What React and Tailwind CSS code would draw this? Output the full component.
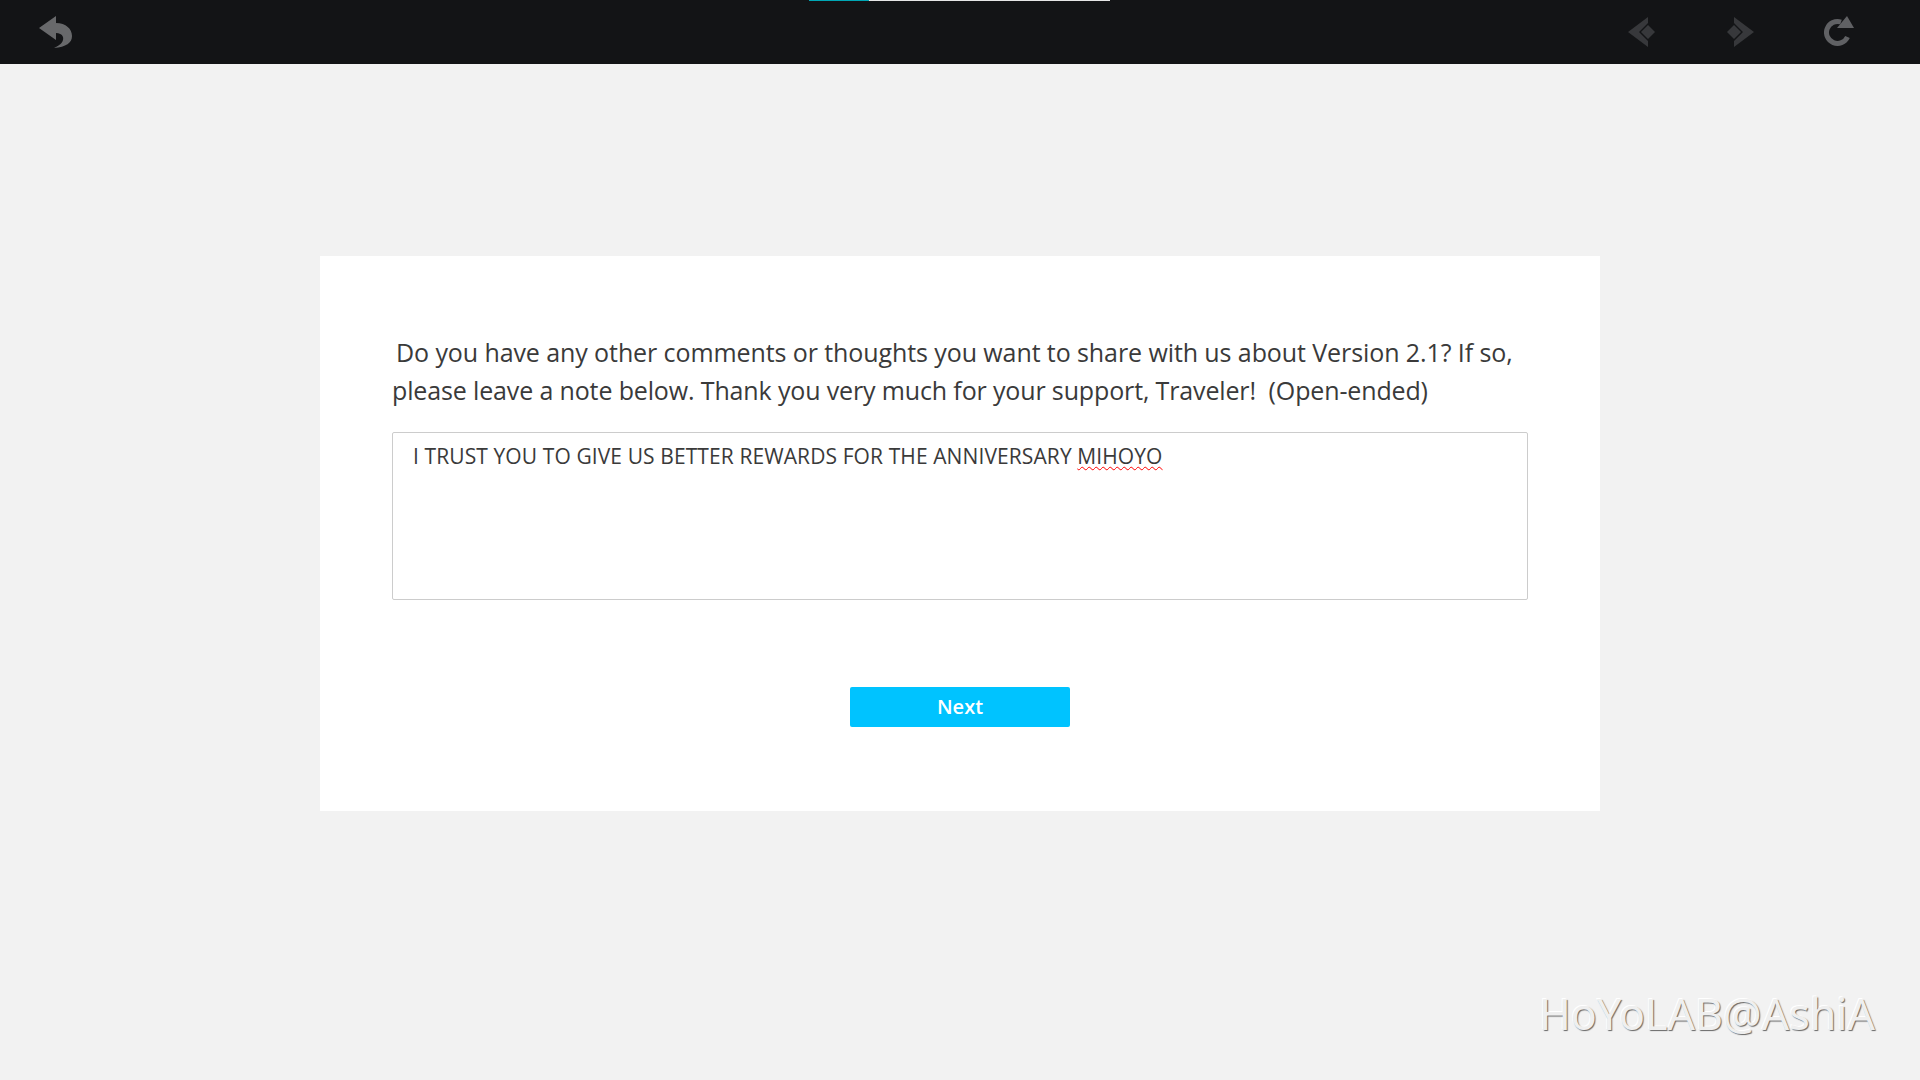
// Survey page inside the in-game browser frame.

function BackIcon() {
  return (
    <svg width="36" height="34" viewBox="0 0 36 34" className="text-[#68696b]">
      <path fill="currentColor" d="M1 12 L18 0 L18 7 C28 7 34 13 34 20 C34 27 28 31 16 32 C23 29 26 25 25 21 C24 18 21 17 18 17 L18 24 Z" />
    </svg>
  );
}

function DiamondLeft() {
  return (
    <svg width="28" height="30" viewBox="0 0 28 30" className="text-[#37383b]">
      <path fill="currentColor" d="M0 15 L20 0 L20 6 L11 15 L20 24 L20 30 Z" />
      <path fill="currentColor" d="M13 15 L20 8 L27 15 L20 22 Z" />
    </svg>
  );
}

function DiamondRight() {
  return (
    <svg width="28" height="30" viewBox="0 0 28 30" className="text-[#37383b]">
      <path fill="currentColor" d="M28 15 L8 0 L8 6 L17 15 L8 24 L8 30 Z" />
      <path fill="currentColor" d="M15 15 L8 8 L1 15 L8 22 Z" />
    </svg>
  );
}

function ReloadIcon() {
  return (
    <svg width="32" height="32" viewBox="0 0 32 32" className="text-[#606164]">
      <path fill="none" stroke="currentColor" strokeWidth="5" d="M23.5 21 A11 11 0 1 1 17 6" />
      <path fill="currentColor" d="M23 0 L30 12 L13 12 Z" />
    </svg>
  );
}

function TopBar() {
  return (
    <div className="relative flex h-16 items-center bg-[#131416]">
      <div className="absolute left-[809px] top-0 flex h-px w-[301px] bg-[#e6e6e6]">
        <div className="h-px w-[60px] bg-[#00a7b5]" />
      </div>
      <div className="ml-[38px] mt-[1px]">
        <BackIcon />
      </div>
      <div className="ml-auto mr-[64px] flex items-center">
        <DiamondLeft />
        <div className="ml-[70px]">
          <DiamondRight />
        </div>
        <div className="ml-[70px]">
          <ReloadIcon />
        </div>
      </div>
    </div>
  );
}

export default function App() {
  return (
    <div className="relative flex h-[1080px] w-[1920px] flex-col overflow-hidden bg-[#f2f2f2] font-['Open_Sans',sans-serif]">
      <TopBar />
      <div className="ml-[320px] mt-[192px] flex h-[555px] w-[1280px] flex-col bg-white px-[72px] pt-[77px]">
        <p className="text-[25px] leading-[38px] text-[#3a3a3a]">
          <span className="pl-[4px] tracking-[-0.09px]">Do you have any other comments or thoughts you want to share with us about Version 2.1? If so,</span>
          <br />
          <span className="tracking-[-0.14px]">please leave a note below. Thank you very much for your support, Traveler!&nbsp; (Open-ended)</span>
        </p>
        <div className="mt-[23px] h-[168px] w-[1136px] rounded-[2px] border border-[#ccc] px-5 py-[9px] text-[21px] leading-7 tracking-[0.1px] text-[#3a3a3a]">
          I TRUST YOU TO GIVE US BETTER REWARDS FOR THE ANNIVERSARY{' '}
          <span className="underline decoration-[#f00] decoration-wavy decoration-1 underline-offset-2">MIHOYO</span>
        </div>
        <button className="mx-auto mt-[87px] h-10 w-[220px] rounded-[2px] bg-[#00c3ff] text-[20px] font-semibold text-white">
          Next
        </button>
      </div>
      <div className="absolute left-[1539px] top-[984px] font-['Noto_Sans',sans-serif] text-[43px] leading-[60px] text-[#efefef] [text-shadow:1px_1px_1px_#666,-1px_-1px_0_#fff]">
        HoYoLAB@AshiA
      </div>
    </div>
  );
}
